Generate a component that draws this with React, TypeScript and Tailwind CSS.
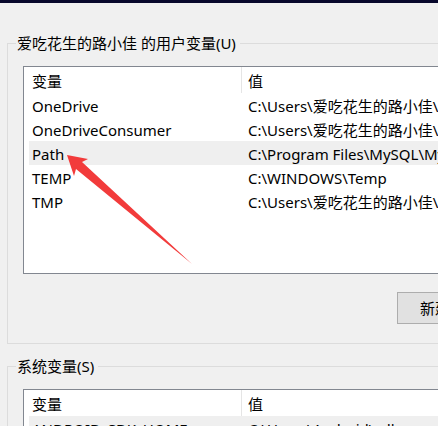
import React from "react";

type Row = { name: string; value: string; selected?: boolean };

const userVars: Row[] = [
  { name: "OneDrive", value: "C:\\Users\\爱吃花生的路小佳\\OneDrive" },
  { name: "OneDriveConsumer", value: "C:\\Users\\爱吃花生的路小佳\\OneDrive" },
  { name: "Path", value: "C:\\Program Files\\MySQL\\MySQL Server 8.0\\bin", selected: true },
  { name: "TEMP", value: "C:\\WINDOWS\\Temp" },
  { name: "TMP", value: "C:\\Users\\爱吃花生的路小佳\\AppData\\Local\\Temp" },
];

const sysVars: Row[] = [
  { name: "ANDROID_SDK_HOME", value: "C:\\Users\\Android\\sdk", selected: true },
];

const VarList = ({ rows, height }: { rows: Row[]; height: string }) => (
  <div className={`ml-[7px] w-[440px] border border-[#828790] bg-white ${height}`}>
    <div className="flex h-[26px] items-center">
      <div className="w-[217px] shrink-0 pl-[8px] pt-[2px]">变量</div>
      <div className="h-full w-px shrink-0 bg-[#e5e5e5]" />
      <div className="pl-[6px] pt-[2px]">值</div>
    </div>
    {rows.map((r) => (
      <div
        key={r.name}
        className={`ml-[5px] flex h-[24px] items-center whitespace-nowrap pt-[2px] ${r.selected ? "bg-[#efefef]" : ""}`}
      >
        <div className="w-[212px] shrink-0 pl-[3px]">{r.name}</div>
        <div className="pl-[7px]">{r.value}</div>
      </div>
    ))}
  </div>
);

export default function App() {
  return (
    <div
      className="relative h-[426px] w-[438px] overflow-hidden bg-[#f0f0f0] text-[15px] leading-[20px] text-black"
      style={{ fontFamily: '"Noto Sans", "Noto Sans CJK SC", sans-serif' }}
    >
      <div className="h-[3px] bg-[#08082c]" />

      <fieldset className="ml-[7px] mt-[30px] w-[460px] border border-[#dcdcdc] pb-[19px] pl-[8px] pt-[13px]">
        <legend className="pl-px pr-[4px]">爱吃花生的路小佳 的用户变量(U)</legend>
        <VarList rows={userVars} height="h-[208px]" />
        <div className="ml-[381px] mt-[18px] flex h-[32px] w-[90px] items-center border border-[#adadad] bg-[#e1e1e1] pl-[22px]">
          新建(N)...
        </div>
      </fieldset>

      <fieldset className="ml-[7px] mt-[12px] w-[460px] border border-[#dcdcdc] pl-[8px] pt-[13px]">
        <legend className="pl-px pr-[4px]">系统变量(S)</legend>
        <VarList rows={sysVars} height="h-[120px]" />
      </fieldset>

      <svg className="pointer-events-none absolute left-0 top-0" width="438" height="426">
        <polygon
          points="67,155 88,159 82,162 192,264 76,169 74,176"
          fill="#f23b3b"
        />
      </svg>
    </div>
  );
}
